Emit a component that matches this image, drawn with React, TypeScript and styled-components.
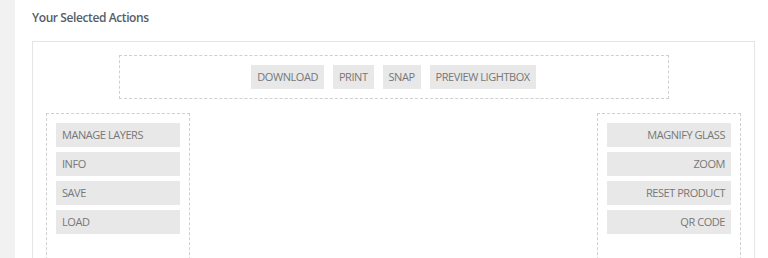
import React from "react";
import styled, { createGlobalStyle } from "styled-components";

const Global = createGlobalStyle`
  html, body { margin: 0; padding: 0; background: #ffffff; }
  body { font-family: "Open Sans", "Noto Sans", sans-serif; }
`;

const Page = styled.div`
  display: flex;
  height: 258px;
  overflow: hidden;
`;

const Sidebar = styled.div`
  width: 15px;
  flex: none;
  background: #f1f1f1;
`;

const Main = styled.div`
  flex: 1;
  padding: 8px 0 0 17px;
`;

const Title = styled.h3`
  margin: 0 0 13px 0;
  font-size: 12px;
  line-height: 20px;
  font-weight: 600;
  color: #555d66;
  letter-spacing: -0.4px;
`;

const Panel = styled.div`
  width: 723px;
  box-sizing: border-box;
  border: 1px solid #e5e5e5;
  padding: 13px;
`;

const TopZone = styled.div`
  width: 550px;
  box-sizing: border-box;
  margin: 0 auto;
  border: 1px dashed #cfcfcf;
  padding: 9px;
  display: flex;
  justify-content: center;
  gap: 9px;
`;

const SideRow = styled.div`
  display: flex;
  justify-content: space-between;
  margin-top: 14px;
`;

const SideZone = styled.div`
  width: 144px;
  box-sizing: border-box;
  border: 1px dashed #cfcfcf;
  padding: 9px 9px 40px 9px;
  display: flex;
  flex-direction: column;
  gap: 5px;
`;

const Action = styled.div<{ $align?: "left" | "right" | "center" }>`
  height: 24px;
  line-height: 24px;
  padding: 0 6px;
  background: #e8e8e8;
  color: #777777;
  font-size: 11px;
  text-transform: uppercase;
  text-align: ${(p) => p.$align ?? "center"};
  white-space: nowrap;
  letter-spacing: -0.45px;
`;

const top = ["Download", "Print", "Snap", "Preview Lightbox"];
const left = ["Manage Layers", "Info", "Save", "Load"];
const right = ["Magnify Glass", "Zoom", "Reset Product", "QR Code"];

export default function App() {
  return (
    <>
      <Global />
      <Page>
        <Sidebar />
        <Main>
          <Title>Your Selected Actions</Title>
          <Panel>
            <TopZone>
              {top.map((t) => (
                <Action key={t}>{t}</Action>
              ))}
            </TopZone>
            <SideRow>
              <SideZone>
                {left.map((t) => (
                  <Action key={t} $align="left">{t}</Action>
                ))}
              </SideZone>
              <SideZone>
                {right.map((t) => (
                  <Action key={t} $align="right">{t}</Action>
                ))}
              </SideZone>
            </SideRow>
          </Panel>
        </Main>
      </Page>
    </>
  );
}
